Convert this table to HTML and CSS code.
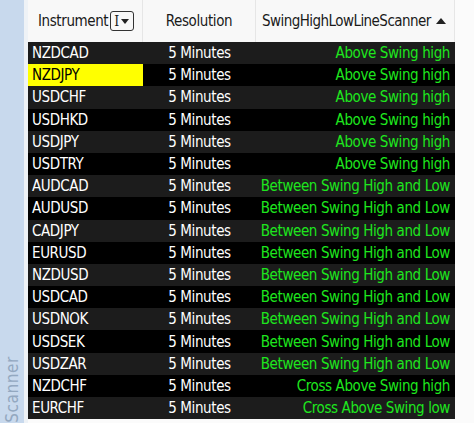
FILE: index.html
```html
<!DOCTYPE html>
<html>
<head>
<meta charset="utf-8">
<link rel="stylesheet" href="styles.css">
</head>
<body>
<div class="app">
  <div class="sidebar"><span class="side-label">Scanner</span></div>
  <div class="main">
    <div class="grid">
      <div class="head c1"><span>Instrument</span><span class="filter"><span class="fi">I</span><svg width="8" height="5" viewBox="0 0 8 5"><path d="M0 0H8L4 5Z" fill="#222"/></svg></span></div>
      <div class="head c2">Resolution</div>
      <div class="head c3">SwingHighLowLineScanner<svg class="sort" width="10" height="6" viewBox="0 0 10 6"><path d="M0 6H10L5 0Z" fill="#222"/></svg></div>
      <div class="head c4"></div>
    </div>
    <div class="rows" id="rows"></div>
  </div>
</div>
<script>
const data = [
["NZDCAD","Above Swing high"],["NZDJPY","Above Swing high"],["USDCHF","Above Swing high"],["USDHKD","Above Swing high"],["USDJPY","Above Swing high"],["USDTRY","Above Swing high"],
["AUDCAD","Between Swing High and Low"],["AUDUSD","Between Swing High and Low"],["CADJPY","Between Swing High and Low"],["EURUSD","Between Swing High and Low"],["NZDUSD","Between Swing High and Low"],["USDCAD","Between Swing High and Low"],["USDNOK","Between Swing High and Low"],["USDSEK","Between Swing High and Low"],["USDZAR","Between Swing High and Low"],
["NZDCHF","Cross Above Swing high"],["EURCHF","Cross Above Swing low"]];
const rows = document.getElementById('rows');
data.forEach((d,i)=>{
  const r = document.createElement('div');
  r.className = 'row ' + (i%2===0 ? 'odd' : 'even');
  r.innerHTML = '<div class="cell c1' + (i===1?' hl':'') + '">' + d[0] + '</div><div class="cell c2">5 Minutes</div><div class="cell c3">' + d[1] + '</div><div class="cell c4"></div>';
  rows.appendChild(r);
});
</script>
</body>
</html>
```
FILE: styles.css
```css
html, body { margin: 0; padding: 0; background: #fbfbfb; }
body { width: 474px; height: 423px; overflow: hidden; font-family: "DejaVu Sans Condensed", "DejaVu Sans", sans-serif; font-stretch: condensed; font-size: 15px; letter-spacing: -0.4px; }
.app { display: flex; height: 423px; }
.sidebar { width: 24px; background: #c8d9ed; display: flex; flex-direction: column; justify-content: flex-end; align-items: center; border-right: 4px solid #eef2f6; }
.side-label { writing-mode: vertical-rl; transform: rotate(180deg); color: #93a8c0; font-size: 17px; letter-spacing: 0.6px; padding-bottom: 2px; font-family: "DejaVu Sans", sans-serif; }
.main { flex: 1; display: flex; flex-direction: column; }
.grid, .row { display: grid; grid-template-columns: 115px 113px 199px 1fr; }
.head { height: 42px; background: #f8f8f8; color: #1a1a1a; display: flex; align-items: center; border-right: 1px solid #e6e6e6; box-sizing: border-box; }
.head.c1 { padding-left: 10px; gap: 2px; }
.head.c2 { justify-content: center; }
.head.c3 { padding-left: 6px; gap: 5px; letter-spacing: -0.55px; }
.head.c4 { border-right: none; background: #fbfbfb; }
.filter { display: inline-flex; align-items: center; gap: 2px; border: 1px solid #333; border-radius: 3px; height: 20px; padding: 0 4px 0 3px; box-sizing: border-box; letter-spacing: 0; }
.fi { font-family: "DejaVu Serif", serif; font-size: 14px; }
.rows { display: flex; flex-direction: column; }
.row { height: 22.2px; }
.row.odd .cell { background: #1c1c1c; }
.row.even .cell { background: #000; }
.cell { display: flex; align-items: center; color: #fff; white-space: nowrap; }
.cell.c1 { padding-left: 4px; }
.cell.c1.hl { background: #ffff00 !important; color: #000; }
.cell.c2 { justify-content: center; }
.cell.c3 { justify-content: flex-end; padding-right: 5px; color: #1ee61e; }
.row .cell.c4 { background: #fbfbfb; }
```
